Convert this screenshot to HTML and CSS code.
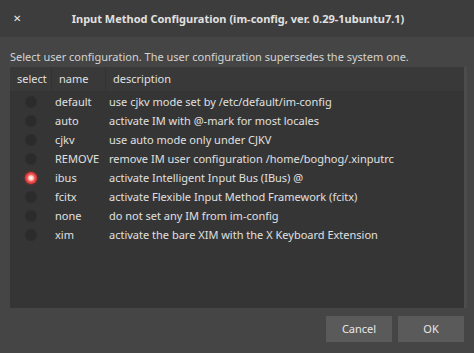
FILE: index.html
```html
<!doctype html>
<html>
<head>
<title>Input Method Configuration</title>
<link rel="stylesheet" href="styles.css">
</head>
<body>

<div class="window">

<div class="titlebar">
<span class="close">&#x2715;</span>
<span class="title">Input Method Configuration (im-config, ver. 0.29-1ubuntu7.1)</span>
</div>

<div class="content">
<div class="message">Select user configuration. The user configuration supersedes the system one.</div>

<div class="tree">
<div class="tree-header">
<div class="col-select">select</div>
<div class="col-name">name</div>
<div class="col-desc">description</div>
</div>

<div class="tree-row">
<div class="col-select"><span class="radio"></span></div>
<div class="col-name">default</div>
<div class="col-desc">use cjkv mode set by /etc/default/im-config</div>
</div>
<div class="tree-row">
<div class="col-select"><span class="radio"></span></div>
<div class="col-name">auto</div>
<div class="col-desc">activate IM with @-mark for most locales</div>
</div>
<div class="tree-row">
<div class="col-select"><span class="radio"></span></div>
<div class="col-name">cjkv</div>
<div class="col-desc">use auto mode only under CJKV</div>
</div>
<div class="tree-row">
<div class="col-select"><span class="radio"></span></div>
<div class="col-name">REMOVE</div>
<div class="col-desc">remove IM user configuration /home/boghog/.xinputrc</div>
</div>
<div class="tree-row">
<div class="col-select"><span class="radio checked"></span></div>
<div class="col-name">ibus</div>
<div class="col-desc">activate Intelligent Input Bus (IBus) @</div>
</div>
<div class="tree-row">
<div class="col-select"><span class="radio"></span></div>
<div class="col-name">fcitx</div>
<div class="col-desc">activate Flexible Input Method Framework (fcitx)</div>
</div>
<div class="tree-row">
<div class="col-select"><span class="radio"></span></div>
<div class="col-name">none</div>
<div class="col-desc">do not set any IM from im-config</div>
</div>
<div class="tree-row">
<div class="col-select"><span class="radio"></span></div>
<div class="col-name">xim</div>
<div class="col-desc">activate the bare XIM with the X Keyboard Extension</div>
</div>
</div>

<div class="buttons">
<div class="button">Cancel</div>
<div class="button">OK</div>
</div>
</div>

</div>

</body>
</html>
```

FILE: styles.css
```css
body {
	margin: 0;
	background: #3c3c3c;
	font-family: "Noto Sans", "DejaVu Sans", sans-serif;
	font-size: 11px;
	color: #e0e0e0;
}

div.window {
	width: 474px;
	height: 353px;
	display: flex;
	flex-direction: column;
}

div.titlebar {
	height: 37px;
	display: flex;
	align-items: center;
	background: #3d3d3d;
	position: relative;
}

span.close {
	position: absolute;
	left: 13px;
	top: 11px;
	font-size: 10px;
	font-weight: bold;
	color: #e8e8e8;
}

span.title {
	flex: 1;
	text-align: center;
	font-weight: bold;
	font-size: 11px;
	padding-left: 2px;
}

div.content {
	flex: 1;
	background: #454545;
	padding: 10px 10px 0 10px;
	display: flex;
	flex-direction: column;
}

div.message {
	height: 20px;
	line-height: 20px;
	color: #d4d4d4;
}

div.tree {
	height: 241px;
	background: #353535;
	box-shadow: 3px 0 0 #4c4c4c;
}

div.tree-header {
	display: flex;
	height: 24px;
	line-height: 24px;
	background: #393939;
	margin-bottom: 1px;
}

div.tree-header div {
	padding-left: 7px;
	box-sizing: border-box;
	border-right: 1px solid #333333;
}

div.tree-header div.col-desc {
	border-right: none;
}

div.tree-row {
	display: flex;
	height: 19px;
	line-height: 19px;
}

div.col-select {
	width: 42px;
	box-sizing: border-box;
}

div.tree-row div.col-select {
	display: flex;
	align-items: center;
	justify-content: center;
}

div.col-name {
	width: 54px;
	box-sizing: border-box;
}

div.tree-row div.col-name,
div.tree-row div.col-desc {
	padding-left: 3px;
}

span.radio {
	width: 12px;
	height: 12px;
	border-radius: 50%;
	background: #2b2b2b;
	box-shadow: inset 0 0 0 1px #303030;
}

span.radio.checked {
	background: radial-gradient(circle, #ffffff 0, #ffd0c8 2px, #f04b4b 4px, #e03a3a 6px);
	box-shadow: 0 0 3px #b03030;
}

div.buttons {
	flex: 1;
	display: flex;
	justify-content: flex-end;
	align-items: flex-start;
	padding-top: 8px;
	gap: 6px;
}

div.button {
	width: 66px;
	height: 26px;
	line-height: 26px;
	text-align: center;
	background: #5a5a5a;
	color: #e8e8e8;
}
```
